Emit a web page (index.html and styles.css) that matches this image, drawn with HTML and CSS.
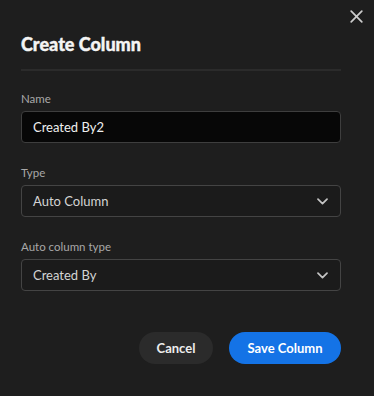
FILE: index.html
```html
<!DOCTYPE html>
<html>
<head>
<meta charset="utf-8">
<link rel="stylesheet" href="styles.css">
</head>
<body>
<div class="modal">
  <button class="close" aria-label="Close">
    <svg width="13" height="13" viewBox="0 0 13 13"><path d="M1.2 1.2L11.8 11.8M11.8 1.2L1.2 11.8" stroke="#cdcdcd" stroke-width="1.7" stroke-linecap="round"/></svg>
  </button>
  <h1 class="title">Create Column</h1>
  <div class="divider"></div>
  <div class="field first">
    <label class="label">Name</label>
    <div class="input">Created By2</div>
  </div>
  <div class="field">
    <label class="label">Type</label>
    <div class="select"><span>Auto Column</span><svg class="chev" width="11" height="7" viewBox="0 0 11 7"><path d="M1 1.2L5.5 5.6L10 1.2" fill="none" stroke="#c4c4c4" stroke-width="1.7" stroke-linecap="round" stroke-linejoin="round"/></svg></div>
  </div>
  <div class="field">
    <label class="label">Auto column type</label>
    <div class="select"><span>Created By</span><svg class="chev" width="11" height="7" viewBox="0 0 11 7"><path d="M1 1.2L5.5 5.6L10 1.2" fill="none" stroke="#c4c4c4" stroke-width="1.7" stroke-linecap="round" stroke-linejoin="round"/></svg></div>
  </div>
  <div class="actions">
    <button class="btn cancel">Cancel</button>
    <button class="btn save">Save Column</button>
  </div>
</div>
</body>
</html>
```
FILE: styles.css
```css
html, body {
  margin: 0;
  padding: 0;
  background: #1e1e1e;
  width: 374px;
  height: 396px;
  overflow: hidden;
}
body {
  font-family: "Lato", "Open Sans", sans-serif;
  color: #e8e8e8;
}
.modal {
  position: relative;
  padding: 0 33px 0 21px;
  display: flex;
  flex-direction: column;
}
.close {
  position: absolute;
  top: 10px;
  right: 11px;
  background: none;
  border: 0;
  padding: 0;
  width: 13px;
  height: 13px;
  display: flex;
}
.title {
  margin: 33px 0 0;
  font-size: 18px;
  font-weight: 900;
  line-height: 22px;
  color: #f4f4f4;
  -webkit-text-stroke: 0.4px #f4f4f4;
}
.divider {
  height: 2px;
  background: #2b2b2b;
  margin-top: 14px;
}
.field {
  display: flex;
  flex-direction: column;
  margin-top: 22px;
}
.field.first { margin-top: 20px; }
.label {
  font-size: 11.5px;
  line-height: 16px;
  color: #a8a8a8;
  margin-bottom: 4px;
}
.input, .select {
  height: 32px;
  box-sizing: border-box;
  border: 1px solid #4a4a4a;
  border-radius: 4px;
  font-size: 13px;
  display: flex;
  align-items: center;
  padding: 0 11px;
}
.input {
  background: #070707;
  color: #efefef;
  border-color: #3e3e3e;
}
.select {
  background: #1b1b1b;
  color: #d4d4d4;
  justify-content: space-between;
  padding-right: 12px;
  border-color: #444;
}
.actions {
  display: flex;
  justify-content: flex-end;
  gap: 16px;
  margin-top: 41px;
}
.btn {
  height: 32px;
  border: 0;
  border-radius: 16px;
  font-family: inherit;
  font-size: 13px;
  font-weight: 700;
  padding: 0;
  color: #ededed;
}
.cancel {
  background: #2b2b2b;
  width: 74px;
}
.save {
  background: #1473e6;
  width: 112px;
  color: #fff;
}
```
